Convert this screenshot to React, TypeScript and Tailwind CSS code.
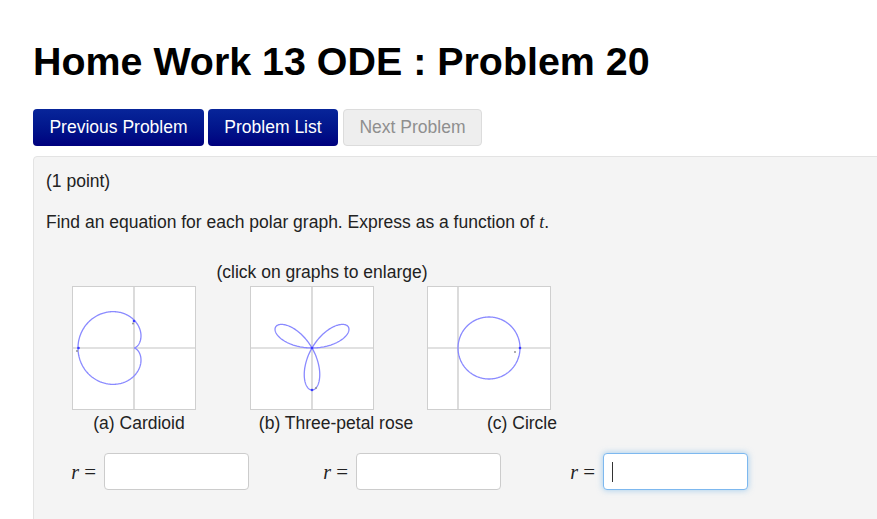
import React from 'react'

type Pt = [number, number]

// polar curve -> svg path, in the 122x122 inner area of a graph image
function polarPath(f: (t: number) => number, cx: number, cy: number, scale: number, t1: number) {
  const pts: Pt[] = []
  const n = 360
  for (let i = 0; i <= n; i++) {
    const t = (t1 * i) / n
    const r = f(t)
    pts.push([cx + r * Math.cos(t) * scale, cy - r * Math.sin(t) * scale])
  }
  return pts.map((p, i) => (i === 0 ? 'M' : 'L') + p[0].toFixed(2) + ' ' + p[1].toFixed(2)).join(' ')
}

type Graph = {
  path: string
  ox: number
  oy: number
  dots: { x: number; y: number; gray?: boolean }[]
}

const graphs: Graph[] = [
  {
    path: polarPath((t) => 1 - Math.cos(t), 61, 61, 28, Math.PI * 2),
    ox: 61,
    oy: 61,
    dots: [
      { x: 61, y: 34 },
      { x: 60, y: 36.5, gray: true },
      { x: 5.5, y: 61 },
      { x: 4, y: 64, gray: true },
    ],
  },
  {
    path: polarPath((t) => Math.sin(3 * t), 61, 61, 42, Math.PI),
    ox: 61,
    oy: 61,
    dots: [
      { x: 61, y: 61 },
      { x: 61, y: 103 },
      { x: 65, y: 101, gray: true },
    ],
  },
  {
    path: polarPath((t) => 2 * Math.cos(t), 30, 61, 31, Math.PI),
    ox: 30,
    oy: 61,
    dots: [
      { x: 92, y: 61 },
      { x: 87, y: 65, gray: true },
    ],
  },
]

function GraphImage({ g }: { g: Graph }) {
  return (
    <div className="w-[124px] h-[124px] border border-[#cfcfcf] bg-white shrink-0">
      <svg width="122" height="122" viewBox="0 0 122 122">
        <line x1="0" y1={g.oy} x2="122" y2={g.oy} stroke="#c4c4c4" strokeWidth="1.2" />
        <line x1={g.ox} y1="0" x2={g.ox} y2="122" stroke="#c4c4c4" strokeWidth="1.2" />
        <path d={g.path} fill="none" stroke="#8a8aff" strokeWidth="1.3" />
        {g.dots.map((d, i) => (
          <circle key={i} cx={d.x} cy={d.y} r={d.gray ? 0.9 : 1.3} fill={d.gray ? '#888' : '#3b3bff'} />
        ))}
      </svg>
    </div>
  )
}

function Answer({ focused }: { focused?: boolean }) {
  return (
    <div className="flex items-center gap-[8px]">
      <span className="w-[30px] flex items-center justify-end text-[20px] text-[#222] whitespace-nowrap" style={{ fontFamily: '"Liberation Serif", serif' }}>
        <i>r</i>
        <span className="ml-[5px] text-[21px]">=</span>
      </span>
      <div className="relative">
        <input
          type="text"
          className={
            focused
              ? 'w-[145px] h-[37px] rounded-[4px] bg-white border border-[#7db8ef] shadow-[0_0_6px_rgba(102,175,233,0.6)] outline-none'
              : 'w-[145px] h-[37px] rounded-[4px] bg-white border border-[#cccccc] outline-none'
          }
        />
        {focused && <div className="absolute left-[9px] top-[9px] w-px h-[20px] bg-[#333]" />}
      </div>
    </div>
  )
}

export default function App() {
  return (
    <div
      className="w-[877px] h-[519px] overflow-hidden bg-white text-[#222]"
      style={{ fontFamily: '"Liberation Sans", Arial, sans-serif' }}
    >
      <div className="pl-[33px] flex flex-col">
        <h1 className="mt-[42px] text-[39.4px] leading-[39px] font-bold text-black whitespace-nowrap">
          Home Work 13 ODE : Problem 20
        </h1>

        {/* nav buttons */}
        <div className="mt-[28px] flex gap-[4px]">
          <button className="w-[171px] h-[37px] rounded-[4px] bg-gradient-to-b from-[#08259a] to-[#00007e] text-white text-[17.5px]">
            Previous Problem
          </button>
          <button className="w-[130px] h-[37px] rounded-[4px] bg-gradient-to-b from-[#08259a] to-[#00007e] text-white text-[17.5px]">
            Problem List
          </button>
          <button className="ml-[1px] w-[139px] h-[37px] rounded-[4px] bg-[#eeeeee] border border-[#dcdcdc] text-[#8f8f8f] text-[17.5px]">
            Next Problem
          </button>
        </div>

        {/* problem panel */}
        <div className="mt-[10px] w-[900px] h-[400px] bg-[#f4f4f4] border border-[#e3e3e3] rounded-tl-[4px] pt-[14px] pl-[12px] text-[17.5px] leading-[20px]">
          <p>(1 point)</p>
          <p className="mt-[21px]">
            Find an equation for each polar graph. Express as a function of{' '}
            <i style={{ fontFamily: '"Liberation Serif", serif' }} className="text-[18px]">t</i>.
          </p>
          <p className="mt-[30px] w-[552px] text-center">(click on graphs to enlarge)</p>

          <div className="mt-[4px] ml-[26px] flex">
            <GraphImage g={graphs[0]} />
            <div className="ml-[54px]">
              <GraphImage g={graphs[1]} />
            </div>
            <div className="ml-[53px]">
              <GraphImage g={graphs[2]} />
            </div>
          </div>

          <div className="mt-[3px] ml-[3px] flex">
            <div className="w-[180px] text-center">(a) Cardioid</div>
            <div className="w-[214px] text-center">(b) Three-petal rose</div>
            <div className="w-[158px] text-center">(c) Circle</div>
          </div>

          <div className="mt-[20px] ml-[20px] flex">
            <Answer />
            <div className="ml-[69px]">
              <Answer />
            </div>
            <div className="ml-[64px]">
              <Answer focused />
            </div>
          </div>
        </div>
      </div>
    </div>
  )
}
